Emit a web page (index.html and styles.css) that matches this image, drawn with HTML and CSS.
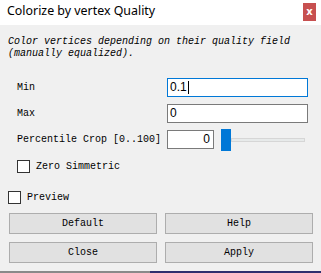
FILE: index.html
```html
<!DOCTYPE html>
<html lang="en">
<head>
    <meta charset="UTF-8">
    <title>Colorize by vertex Quality</title>
    <link rel="stylesheet" href="styles.css">
</head>
<body>
    <div class="window">
        <div class="titlebar">
            <span class="title">Colorize by vertex Quality</span>
            <span class="close-btn">x</span>
        </div>

        <div class="content">
            <p class="desc">Color vertices depending on their quality field<br>(manually equalized).</p>

            <div class="params">
                <div class="row">
                    <label class="lbl">Min</label>
                    <div class="field focused">0.1<span class="caret"></span></div>
                </div>
                <div class="row">
                    <label class="lbl">Max</label>
                    <div class="field">0</div>
                </div>
                <div class="row">
                    <label class="lbl">Percentile Crop [0..100]</label>
                    <div class="spin">0</div>
                    <div class="slider">
                        <span class="handle"></span>
                        <span class="track"></span>
                    </div>
                </div>
                <div class="check sub">
                    <span class="box"></span>
                    <span>Zero Simmetric</span>
                </div>
            </div>

            <div class="check preview">
                <span class="box"></span>
                <span>Preview</span>
            </div>

            <div class="buttons">
                <button>Default</button>
                <button>Help</button>
                <button>Close</button>
                <button>Apply</button>
            </div>
        </div>
        <div class="strip"><span class="strip-a"></span><span class="strip-b"></span></div>
    </div>
</body>
</html>
```

FILE: styles.css
```css
/* janela do dialogo */
body {
    margin: 0;
    padding: 0;
    background: #f0f0f0;
    font-family: "Liberation Mono", monospace;
    font-size: 10px;
    color: #000;
}

.window {
    width: 321px;
    height: 273px;
    display: flex;
    flex-direction: column;
    overflow: hidden;
}

.titlebar {
    height: 25px;
    background: #fff;
    display: flex;
    align-items: flex-start;
    justify-content: space-between;
    flex-shrink: 0;
}

.title {
    font-family: "Noto Sans", sans-serif;
    font-size: 12.4px;
    line-height: 21px;
    padding-left: 7px;
}

.close-btn {
    width: 13px;
    height: 18px;
    margin-top: 3px;
    margin-right: 5px;
    background: #c75050;
    color: #fff;
    font-family: "DejaVu Sans", sans-serif;
    font-weight: bold;
    font-size: 10px;
    line-height: 17px;
    text-align: center;
}

.content {
    flex: 1;
    display: flex;
    flex-direction: column;
}

.desc {
    margin: 11px 0 0 8px;
    font-style: italic;
    line-height: 12px;
}

.params {
    margin-top: 18px;
    padding-left: 17px;
    display: flex;
    flex-direction: column;
    gap: 7px;
}

.row {
    display: flex;
    align-items: center;
    height: 19px;
}

.lbl {
    width: 150px;
    flex-shrink: 0;
}

.field {
    width: 137px;
    height: 17px;
    background: #fff;
    border: 1px solid #7a7a7a;
    font-family: "Liberation Sans", sans-serif;
    font-size: 12px;
    line-height: 17px;
    padding-left: 2px;
    display: flex;
    align-items: center;
}

.field.focused {
    border-color: #0078d7;
}

.caret {
    display: inline-block;
    width: 1px;
    height: 13px;
    background: #000;
    margin-left: 1px;
}

.spin {
    width: 42px;
    height: 17px;
    background: #fff;
    border: 1px solid #7a7a7a;
    font-family: "Liberation Sans", sans-serif;
    font-size: 12px;
    line-height: 17px;
    text-align: right;
    padding-right: 3px;
}

.slider {
    margin-left: 7px;
    display: flex;
    align-items: center;
    width: 84px;
}

.handle {
    width: 10px;
    height: 22px;
    background: #0078d7;
}

.track {
    flex: 1;
    height: 2px;
    background: #e7eaea;
    border: 1px solid #d6d6d6;
}

.check {
    display: flex;
    align-items: center;
    gap: 6px;
}

.box {
    width: 11px;
    height: 11px;
    border: 1px solid #333;
    background: #fff;
}

.check.sub {
    margin-top: 4px;
}

.check.preview {
    margin-top: 18px;
    padding-left: 8px;
}

.buttons {
    margin: 9px 0 0 9px;
    display: grid;
    grid-template-columns: 148px 148px;
    column-gap: 8px;
    row-gap: 8px;
}

button {
    height: 21px;
    background: #e1e1e1;
    border: 1px solid #adadad;
    font-family: "Liberation Mono", monospace;
    font-size: 10px;
    padding: 0;
    color: #000;
}

.strip {
    height: 2px;
    display: flex;
    flex-shrink: 0;
}

.strip-a {
    width: 150px;
    background: #8a8a8a;
}

.strip-b {
    flex: 1;
    background: #2f2f6e;
}
```
